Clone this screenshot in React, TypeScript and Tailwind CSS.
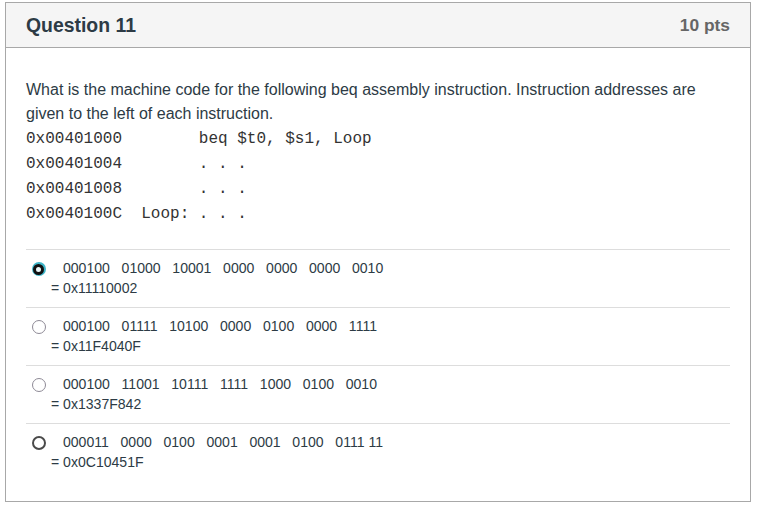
import React from "react";

const answers = [
  { a: "000100   01000   10001   0000   0000   0000   0010", b: "= 0x11110002", state: "selected" },
  { a: "000100   01111   10100   0000   0100   0000   1111", b: "= 0x11F4040F", state: "normal" },
  { a: "000100   11001   10111   1111   1000   0100   0010", b: "= 0x1337F842", state: "normal" },
  { a: "000011   0000   0100   0001   0001   0100   0111 11", b: "= 0x0C10451F", state: "hover" },
];

function Radio({ state }: { state: string }) {
  if (state === "selected") {
    return (
      <div className="w-[14px] h-[14px] rounded-full bg-[#3fb6c9] flex items-center justify-center">
        <div className="w-[11px] h-[11px] rounded-full border-[3px] border-[#111111] bg-[#e8f7f9]" />
      </div>
    );
  }
  if (state === "hover") {
    return <div className="w-[14px] h-[14px] rounded-full border-2 border-[#4a4a4a] bg-white" />;
  }
  return <div className="w-[14px] h-[14px] rounded-full border-[1.5px] border-[#8e8a96] bg-white" />;
}

export default function App() {
  return (
    <div className="w-[759px] h-[509px] bg-white" style={{ fontFamily: '"Liberation Sans", Arial, sans-serif' }}>
      <div className="ml-[5px] mt-[2px] w-[746px] h-[500px] border border-[#a8a8a8] flex flex-col">
        <div className="h-[45px] bg-[#f5f5f5] border-b border-[#a8a8a8] flex items-center justify-between pl-[20px] pr-[20px] pt-[1px] shrink-0">
          <div className="text-[19.4px] font-bold text-[#2d3b45]">Question 11</div>
          <div className="text-[17.4px] font-bold text-[#666666]">10 pts</div>
        </div>
        <div className="pl-[20px] pr-[20px] pt-[30px]">
          <div className="text-[16px] leading-[24px] text-[#2d3b45]">
            What is the machine code for the following beq assembly instruction. Instruction addresses are given to the left of each instruction.
          </div>
          <div className="mt-[1px] text-[16px] leading-[25px] text-[#333333] whitespace-pre" style={{ fontFamily: '"Liberation Mono", "Courier New", monospace' }}>
            <div>{"0x00401000        beq $t0, $s1, Loop"}</div>
            <div>{"0x00401004        . . ."}</div>
            <div>{"0x00401008        . . ."}</div>
            <div>{"0x0040100C  Loop: . . ."}</div>
          </div>
          <div className="mt-[22px] flex flex-col">
            {answers.map((ans, i) => (
              <div key={i} className="border-t border-[#dddddd] h-[58px] pt-[8px] flex text-[14.05px] leading-[20px] text-[#2d3b45]">
                <div className="w-[25px] flex justify-center pt-[4px] shrink-0">
                  <Radio state={ans.state} />
                </div>
                <div className="whitespace-pre">
                  <div className="pl-[12px]">{ans.a}</div>
                  <div>{ans.b}</div>
                </div>
              </div>
            ))}
          </div>
        </div>
      </div>
    </div>
  );
}
